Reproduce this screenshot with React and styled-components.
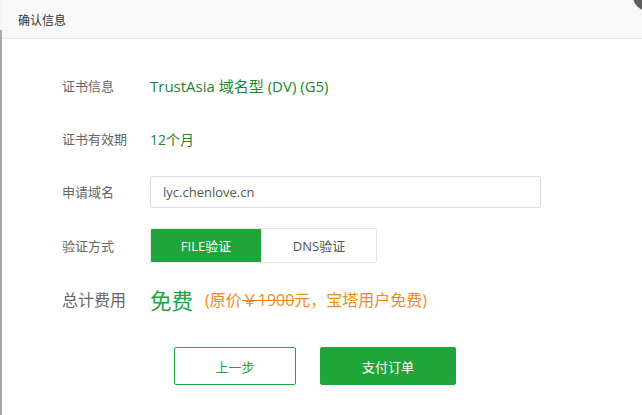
import React from "react";
import styled, { createGlobalStyle } from "styled-components";

const Global = createGlobalStyle`
  html, body { margin: 0; padding: 0; background: #fff; }
  body { font-family: "Open Sans", "Noto Sans CJK SC", sans-serif; }
  * { box-sizing: border-box; }
`;

const Page = styled.div`
  display: flex;
  width: 642px;
  height: 415px;
  overflow: hidden;
  position: relative;
`;

const Backdrop = styled.div`
  width: 2px;
  flex: none;
  background: linear-gradient(
    to bottom,
    #f4f4f4 0 30px,
    #a9a9a9 30px
  );
`;

const Dialog = styled.div`
  flex: 1;
  display: flex;
  flex-direction: column;
  background: #fff;
  font-family: "Open Sans", "Noto Sans CJK SC", sans-serif;
`;

const Header = styled.div`
  height: 39px;
  display: flex;
  align-items: center;
  padding: 1px 0 0 16px;
  background: #f8f8f8;
  border-bottom: 1px solid #e9e9e9;
  font-size: 12px;
  color: #333;
`;

const Close = styled.div`
  position: absolute;
  right: -21px;
  top: -19px;
  width: 30px;
  height: 30px;
  border-radius: 50%;
  background: #5f5f5f;
  display: flex;
  align-items: center;
  justify-content: center;
`;

const Body = styled.div`
  padding: 20px 0 0 60px;
  display: flex;
  flex-direction: column;
`;

const Row = styled.div`
  display: flex;
  align-items: center;
  height: ${(p) => p.$h || 53}px;
`;

const Label = styled.div`
  width: 88px;
  flex: none;
  color: #666;
  font-size: ${(p) => (p.$big ? 16 : 13)}px;
`;

const Value = styled.div`
  color: #20862e;
  font-size: ${(p) => p.$size || 14}px;
`;

const Input = styled.input`
  width: 391px;
  height: 32px;
  border: 1px solid #dcdce8;
  border-radius: 2px;
  padding: 0 12px;
  font-family: "Open Sans", "Noto Sans CJK SC", sans-serif;
  font-size: 13px;
  color: #555;
  outline: none;
`;

const Toggle = styled.div`
  display: flex;
  height: 35px;
  border: 1px solid #e6e6e6;
  border-radius: 2px;
  overflow: hidden;
`;

const ToggleItem = styled.div`
  width: ${(p) => p.$w}px;
  display: flex;
  align-items: center;
  justify-content: center;
  font-size: 13px;
  background: ${(p) => (p.$active ? "#20a53a" : "#fff")};
  color: ${(p) => (p.$active ? "#fff" : "#555")};
  border-right: ${(p) => (p.$active ? "1px solid #e6e6e6" : "none")};
`;

const Free = styled.span`
  color: #20a53a;
  font-size: 21.5px;
  margin-right: 12px;
`;

const Orig = styled.span`
  color: #f0891e;
  font-size: 16px;
`;

const Strike = styled.span`
  text-decoration: line-through;
`;

const Actions = styled.div`
  display: flex;
  gap: 24px;
  padding: 21px 0 0 172px;
`;

const Button = styled.div`
  width: ${(p) => p.$w}px;
  height: 38px;
  display: flex;
  align-items: center;
  justify-content: center;
  border-radius: 2px;
  font-size: 13px;
  border: 1px solid #20a53a;
  background: ${(p) => (p.$primary ? "#20a53a" : "#fff")};
  color: ${(p) => (p.$primary ? "#fff" : "#20a53a")};
`;

export default function App() {
  return (
    <Page>
      <Global />
      <Backdrop />
      <Dialog>
        <Header>确认信息</Header>
        <Body>
          <Row>
            <Label>证书信息</Label>
            <Value $size={15}>TrustAsia 域名型 (DV) (G5)</Value>
          </Row>
          <Row>
            <Label>证书有效期</Label>
            <Value>12个月</Value>
          </Row>
          <Row>
            <Label>申请域名</Label>
            <Input defaultValue="lyc.chenlove.cn" readOnly />
          </Row>
          <Row $h={54}>
            <Label>验证方式</Label>
            <Toggle>
              <ToggleItem $w={111} $active>FILE验证</ToggleItem>
              <ToggleItem $w={114}>DNS验证</ToggleItem>
            </Toggle>
          </Row>
          <Row $h={54}>
            <Label $big>总计费用</Label>
            <Free>免费</Free>
            <Orig>
              (原价<Strike>￥1900</Strike>元，宝塔用户免费)
            </Orig>
          </Row>
        </Body>
        <Actions>
          <Button $w={122}>上一步</Button>
          <Button $w={136} $primary>支付订单</Button>
        </Actions>
      </Dialog>
      <Close>
        <svg width="12" height="12" viewBox="0 0 12 12">
          <path d="M2 2L10 10M10 2L2 10" stroke="#fff" strokeWidth="2" />
        </svg>
      </Close>
    </Page>
  );
}
